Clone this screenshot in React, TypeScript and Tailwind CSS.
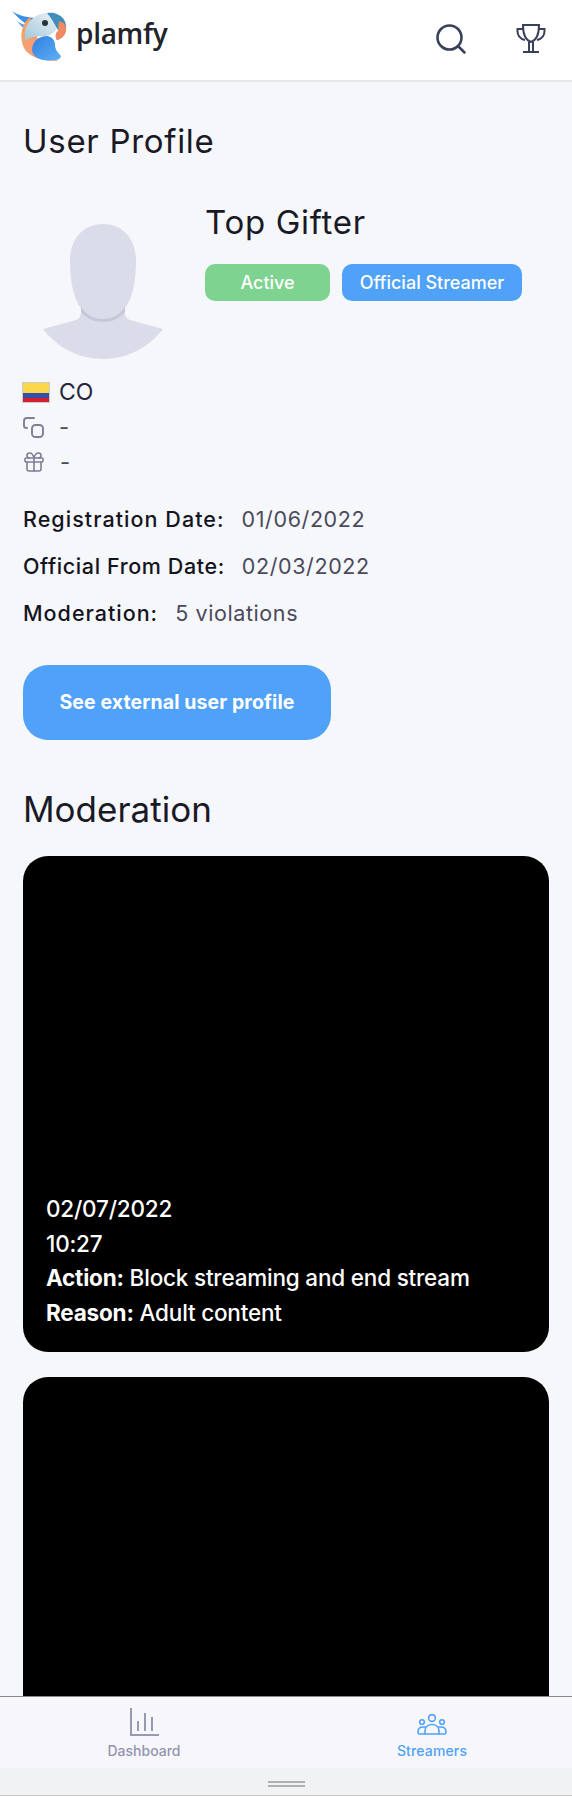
import { Search, Gift } from 'lucide-react';

const Logo = () => (
  <svg width="62" height="54" viewBox="0 0 62 54" fill="none">
    <defs>
      <linearGradient id="body" x1="0" y1="0" x2="1" y2="1">
        <stop offset="0" stopColor="#f7a35c" />
        <stop offset="1" stopColor="#f39a8e" />
      </linearGradient>
      <linearGradient id="head" x1="0" y1="1" x2="1" y2="0">
        <stop offset="0" stopColor="#9fc6de" />
        <stop offset="1" stopColor="#f2f4f4" />
      </linearGradient>
      <linearGradient id="belly" x1="0" y1="0" x2="1" y2="1">
        <stop offset="0" stopColor="#2f7fe0" />
        <stop offset="1" stopColor="#5fb0f5" />
      </linearGradient>
    </defs>
    <path d="M0 2C6 6 13 8 22 9L16 16C11 13 5 8 0 2Z" fill="#3d8fe8" />
    <path d="M5 12C9 15 13 16 17 16L14 21C11 19 8 16 5 12Z" fill="#4fa0ee" />
    <path d="M18 8C9 15 7 29 12 39C17 48 29 52 46 52L30 42L24 24Z" fill="url(#body)" />
    <path d="M13 24C14 13 24 4 35 4C41 4 46 6 49 10C46 20 42 26 33 27C27 28 20 26 13 32Z" fill="url(#head)" />
    <path d="M35 4C45 2 56 9 54 21C53 26 49 30 45 31C43 28 44 24 47 22C44 19 42 12 35 4Z" fill="#3f8fb8" />
    <path d="M47 12C52 13 55 17 54 22C53 27 49 30 45 31C43 28 43 24 46 22Z" fill="#f08a63" />
    <path d="M20 40C21 32 27 27 35 27C41 28 43 32 43 36C43 40 46 44 49 47C48 51 45 51 41 51C31 53 20 49 20 40Z" fill="url(#belly)" />
    <circle cx="33" cy="14" r="3" fill="#26313a" />
  </svg>
);

const TrophyIcon = () => (
  <svg width="30" height="30" viewBox="0 0 30 30" fill="none" stroke="#38405a" strokeWidth="2">
    <path d="M7 1H23C23 10 21 16 15 18C9 16 7 10 7 1Z" />
    <path d="M7 5H1.500C1 11 4 15 9 16" />
    <path d="M23 5H28.500C29 11 26 15 21 16" />
    <path d="M13 18V27M17 18V27" />
    <path d="M7 28H23" />
  </svg>
);

const Avatar = () => (
  <svg width="156" height="136" viewBox="0 0 156 136" className="block">
    <path
      d="M78 0C97 0 111 14 111 37C111 60 106 77 100 84C99 88 100 94 105 96L138 105C124 123 103 135 78 135C53 135 32 123 18 105L51 96C56 94 57 88 56 84C50 77 45 60 45 37C45 14 59 0 78 0Z"
      fill="#dadcea"
    />
    <path d="M56 83C62 92 70 95 78 95C86 95 94 92 100 83L100 88C94 95 86 98 78 98C70 98 62 95 56 88Z" fill="#c6c8d8" />
  </svg>
);

const Flag = () => (
  <div className="flex h-[21px] w-[28px] flex-col border border-[#c9cbd0]">
    <div className="h-[10px] bg-[#fcd848]" />
    <div className="h-[5px] bg-[#3450a8]" />
    <div className="h-[4px] bg-[#d0202e]" />
  </div>
);

const CopyIcon = () => (
  <svg width="23" height="23" viewBox="0 0 23 23" fill="none" stroke="#7d7f97" strokeWidth="1.9" strokeLinecap="round">
    <path d="M12 2H5C3.300 2 2 3.300 2 5V10C2 11.200 2.800 12 5 12" />
    <rect x="10" y="9" width="11" height="12" rx="3.500" />
  </svg>
);

const StreamersIcon = () => (
  <svg width="30" height="24" viewBox="0 0 30 24" fill="none" stroke="#4fa2f7" strokeWidth="1.6">
    <circle cx="15" cy="5" r="3.400" />
    <circle cx="5" cy="9" r="2.300" />
    <circle cx="25" cy="9" r="2.300" />
    <path d="M8 21V18C8 14 11 11.500 15 11.500C19 11.500 22 14 22 18V21Z" />
    <path d="M8 21H2C1 21 1 20 1 19C1 16 3 14 6 14H9" />
    <path d="M22 21H28C29 21 29 20 29 19C29 16 27 14 24 14H21" />
  </svg>
);

const InfoRow = ({ label, value, labelClass }: { label: string; value: string; labelClass: string }) => (
  <p className="flex h-[47px] items-center gap-[17px] text-[21.5px] tracking-[0.6px]">
    <span className={`font-medium text-[#14141f] ${labelClass}`}>{label}</span>
    <span className="text-[#4a4a5c]">{value}</span>
  </p>
);

export default function App() {
  return (
    <div className="flex h-[1796px] w-[572px] flex-col overflow-hidden bg-[#f6f7fa] font-['Inter',sans-serif]">
      {/* header */}
      <header className="flex h-[82px] shrink-0 items-start justify-between border-b-2 border-[#e6e6e8] bg-white">
        <div className="flex items-center pl-[12px] pt-[9px]">
          <Logo />
          <span className="ml-[2px] mt-[-6px] font-['Open_Sans',sans-serif] text-[28px] font-semibold leading-none tracking-[-0.3px] text-[#23232b]">
            plamfy
          </span>
        </div>
        <div className="flex items-center gap-[47px] pr-[26px] pt-[21px]">
          <Search size={36} strokeWidth={1.700} color="#38405a" />
          <TrophyIcon />
        </div>
      </header>

      <main className="min-h-0 flex-1 overflow-hidden px-[23px]">
        <h1 className="mt-[39px] text-[33px] font-normal leading-[40px] tracking-[0.7px] text-[#1a1a26]">User Profile</h1>

        {/* profile top */}
        <div className="mt-[18px] flex">
          <div className="ml-[2px] mt-[45px] h-[136px] w-[156px] shrink-0">
            <Avatar />
          </div>
          <div className="ml-[24px] mt-[23px]">
            <h2 className="text-[33px] font-normal leading-[40px] tracking-[0.7px] text-[#1a1a26]">Top Gifter</h2>
            <div className="mt-[22px] flex gap-[12px]">
              <span className="flex h-[37px] w-[125px] items-center justify-center rounded-[10px] bg-[#7dd38f] text-[18px] font-medium text-white">
                Active
              </span>
              <span className="flex h-[37px] w-[180px] items-center justify-center rounded-[10px] bg-[#4fa2f7] text-[18px] font-medium text-white">
                Official Streamer
              </span>
            </div>
          </div>
        </div>

        {/* flag + stats */}
        <div className="-ml-[1px] mt-[20px] flex flex-col gap-[11px] text-[#4a4a5c]">
          <div className="flex h-[24px] items-center gap-[9px] text-[23px] text-[#26263a]">
            <Flag />
            CO
          </div>
          <div className="flex h-[24px] items-center gap-[14px] text-[22px]">
            <CopyIcon />
            -
          </div>
          <div className="flex h-[24px] items-center gap-[14px] text-[22px]">
            <Gift size={24} strokeWidth={1.600} color="#7d7f97" />
            -
          </div>
        </div>

        <div className="mt-[22px]">
          <InfoRow label="Registration Date:" value="01/06/2022" labelClass="tracking-[1.05px]" />
          <InfoRow label="Official From Date:" value="02/03/2022" labelClass="tracking-[0.6px]" />
          <InfoRow label="Moderation:" value="5 violations" labelClass="tracking-[1px]" />
        </div>

        <button className="mt-[28px] flex h-[75px] w-[308px] items-center justify-center rounded-[25px] bg-[#4fa2f7] text-[19.5px] font-bold tracking-[0.1px] text-white">
          See external user profile
        </button>

        <h2 className="mt-[48px] text-[35px] font-normal leading-[42px] text-[#1a1a26]">Moderation</h2>

        {/* moderation cards */}
        <div className="mt-[26px] flex flex-col gap-[25px]">
          <div className="flex h-[496px] flex-col justify-end rounded-[25px] bg-black px-[23px] pb-[22px] text-[22.5px] font-medium leading-[34.5px] tracking-[-0.2px] text-white">
            <p>02/07/2022</p>
            <p>10:27</p>
            <p>
              <span className="font-bold">Action:</span> Block streaming and end stream
            </p>
            <p>
              <span className="font-bold">Reason:</span> Adult content
            </p>
          </div>
          <div className="h-[496px] rounded-[25px] bg-black" />
        </div>
      </main>

      {/* bottom nav */}
      <nav className="flex h-[72px] shrink-0 items-start border-t border-[#8a8a8a] bg-[#f7f7fb]">
        <div className="flex flex-1 flex-col items-center pl-[4px] pt-[11px]">
          <svg width="30" height="29" viewBox="0 0 30 29" fill="none" stroke="#9799b4" strokeWidth="2">
            <path d="M2 0V27H30" />
            <path d="M9 13V23M16 5V23M23 9V23" />
          </svg>
          <span className="mt-[5px] text-[14px] font-medium leading-[18px] text-[#9294ae]">Dashboard</span>
        </div>
        <div className="flex flex-1 flex-col items-center pl-[8px] pt-[16px]">
          <StreamersIcon />
          <span className="mt-[5px] text-[14px] font-medium leading-[18px] tracking-[0.15px] text-[#4fa2f7]">Streamers</span>
        </div>
      </nav>
      <div className="flex h-[28px] shrink-0 items-start justify-center border-b border-[#c4c4c4] bg-[#f1f2f3] pt-[13px]">
        <div className="h-[6px] w-[37px] border-y-2 border-[#b0b0b0]" />
      </div>
    </div>
  );
}
